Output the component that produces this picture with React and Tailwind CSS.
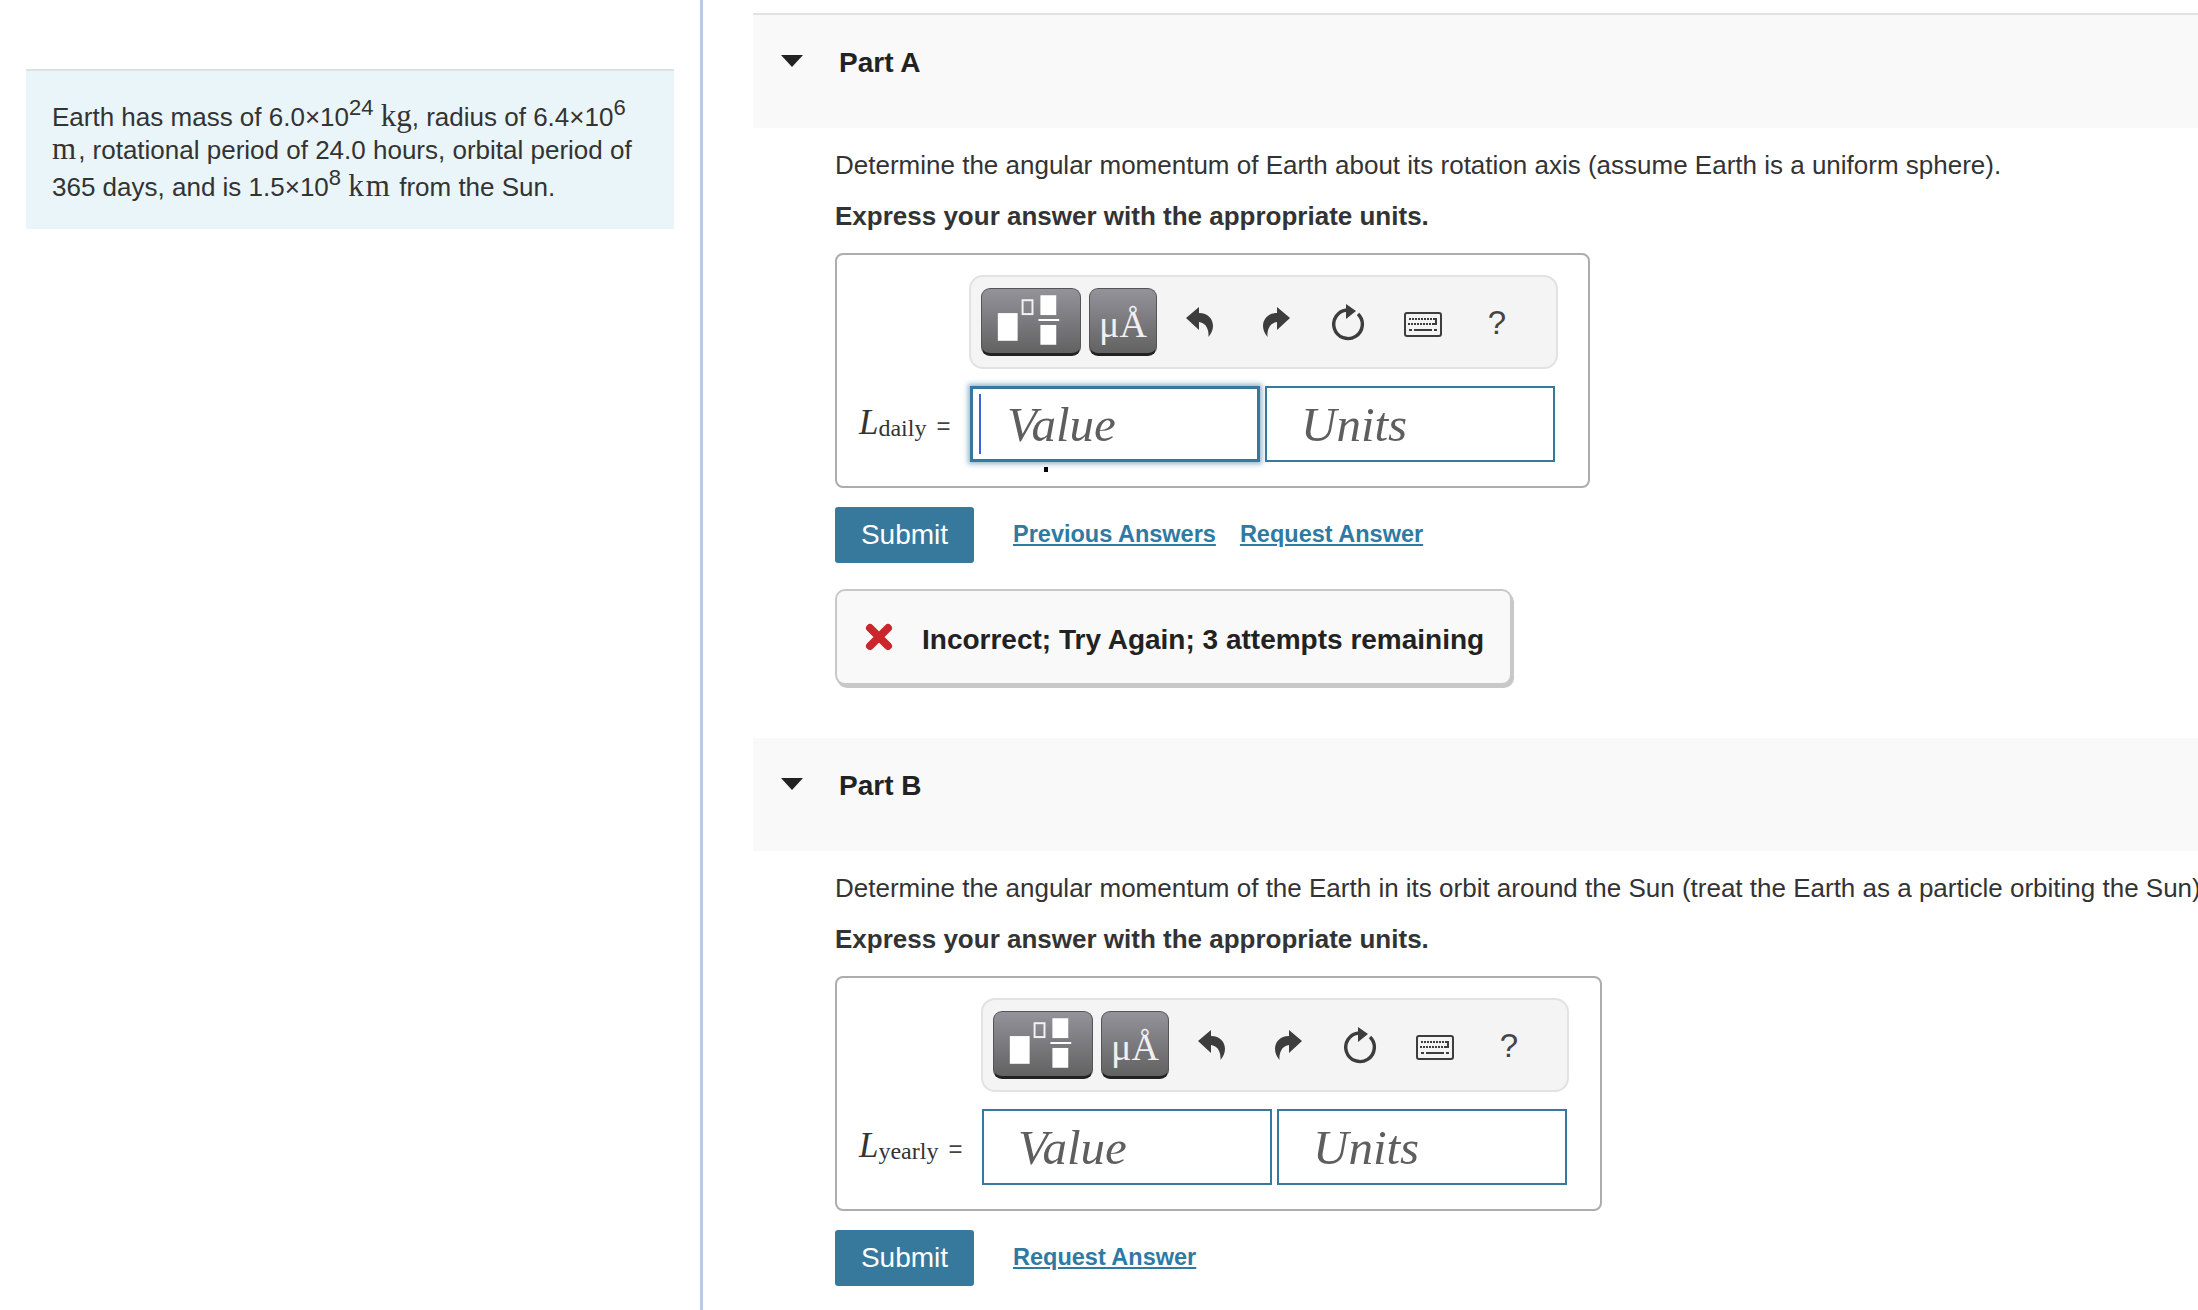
import React from "react";

const sans = "font-['Liberation_Sans',Arial,sans-serif]";
const serif = "font-['Liberation_Serif','Times_New_Roman',serif]";

function Undo({ flip }) {
  return (
    <svg width="27" height="30" viewBox="0 0 27 30" className={flip ? "-scale-x-100" : ""}>
      <path d="M0 11 L13 0 V6 C22 6 27 12 27 19 C27 23 25 27 22.5 30 C23 24 21 16 13 15 V23 Z" fill="#3d3d3d" />
    </svg>
  );
}

function Rotate() {
  return (
    <svg width="34" height="38" viewBox="0 0 34 38">
      <path d="M15 7 A14.3 14.3 0 1 0 26 11" fill="none" stroke="#3d3d3d" strokeWidth="3.4" />
      <path d="M14 1 L24 8 L14 16 Z" fill="#3d3d3d" />
    </svg>
  );
}

function Keyboard() {
  const top = [6, 9, 12, 15, 18, 21, 24, 27, 30];
  const mid = [5, 8, 11, 14, 17, 20, 23, 26];
  return (
    <svg width="38" height="25" viewBox="0 0 38 25">
      <rect x="1" y="1" width="36" height="23" rx="2" fill="#f4f4f4" stroke="#3d3d3d" strokeWidth="2" />
      {top.map((x) => <rect key={x} x={x - 1} y="6" width="2" height="2" fill="#3d3d3d" />)}
      {mid.map((x) => <rect key={x} x={x - 1} y="11" width="2" height="2" fill="#3d3d3d" />)}
      <path d="M31 6h2v7h-5v-2h3z" fill="#3d3d3d" />
      <rect x="5" y="17" width="3" height="2" fill="#3d3d3d" />
      <rect x="10" y="17" width="18" height="2" fill="#3d3d3d" />
      <rect x="30" y="17" width="3" height="2" fill="#3d3d3d" />
    </svg>
  );
}

function Toolbar({ className }) {
  const tool =
    "flex items-center justify-center rounded-[9px] h-[68px] border border-[#555] border-b-[3px] border-b-[#222] bg-gradient-to-b from-[#94939b] to-[#626262]";
  return (
    <div className={`flex items-center h-[94px] rounded-[14px] border-2 border-[#e2e2e2] bg-[#f4f4f4] pl-[10px] ${className}`}>
      <div className={`${tool} w-[100px]`}>
        <svg width="99" height="66" viewBox="0 0 99 66">
          <rect x="16" y="25" width="20" height="28" fill="#fff" />
          <rect x="41" y="12" width="10" height="14" fill="none" stroke="#f2f2f2" strokeWidth="2" />
          <rect x="59" y="7" width="16" height="20" fill="#fff" />
          <rect x="57" y="31" width="21" height="2" fill="#fff" />
          <rect x="59" y="37" width="16" height="20" fill="#fff" />
        </svg>
      </div>
      <div className={`${tool} w-[68px] ml-[8px] ${serif} text-[38px] leading-none text-[#f0f0f0] pt-[5px]`}>μÅ</div>
      <div className="w-[84px] flex justify-center"><Undo /></div>
      <div className="w-[70px] flex justify-center"><Undo flip /></div>
      <div className="w-[76px] flex justify-center"><Rotate /></div>
      <div className="w-[72px] flex justify-center pt-[5px]"><Keyboard /></div>
      <div className={`w-[76px] text-center ${sans} text-[33px] leading-none text-[#444]`}>?</div>
    </div>
  );
}

function InputBox({ text, focused, cursor }) {
  return (
    <div
      className={`relative flex items-center w-[290px] h-[76px] border-2 border-[#37799c] bg-white pl-[34px] ${serif} italic text-[49px] leading-none text-[#5e5e5e] ${
        focused ? "border-[3px] shadow-[0_0_5px_2px_rgba(55,121,156,0.55)]" : ""
      }`}
    >
      {text}
      {cursor && <span className="absolute left-[6px] top-[5px] w-[2px] h-[60px] bg-[#3f64d2]" />}
      {cursor && <span className="absolute left-[71px] top-[78px] w-[4px] h-[5px] bg-black" />}
    </div>
  );
}

function AnswerBox({ sub, boxW, toolbar, labelW, focused }) {
  return (
    <div className={`${boxW} h-[235px] rounded-[8px] border-2 border-[#adadad] pt-[20px] bg-white`}>
      <Toolbar className={toolbar} />
      <div className="flex items-center mt-[17px]">
        <div className={`${labelW} pl-[22px] pb-[3px] flex items-baseline text-[#333] whitespace-nowrap`}>
          <span className={`${serif} italic text-[35px] leading-none`}>L</span>
          <span className={`${serif} text-[24px] leading-none relative top-[2px]`}>{sub}</span>
          <span className={`${sans} text-[24px] leading-none ml-[10px] text-[#444]`}>=</span>
        </div>
        <InputBox text="Value" focused={focused} cursor={focused} />
        <div className="w-[5px]" />
        <InputBox text="Units" />
      </div>
    </div>
  );
}

function Actions({ previous }) {
  const link = "text-[#2f7aa3] underline font-bold text-[23.5px] leading-none";
  return (
    <div className="flex items-center mt-[19px]">
      <button className="w-[139px] h-[56px] rounded-[3px] bg-[#37799c] text-white text-[28px] leading-none">Submit</button>
      <a className={`${link} ml-[39px]`}>{previous ? "Previous Answers" : "Request Answer"}</a>
      {previous && <a className={`${link} ml-[24px]`}>Request Answer</a>}
    </div>
  );
}

function PartHeader({ title, className }) {
  return (
    <div className={`flex items-start bg-[#f9f9f9] ${className}`}>
      <svg width="22" height="12" viewBox="0 0 22 12" className="ml-[28px] mt-[40px]">
        <path d="M0 0 H22 L11 12 Z" fill="#222" />
      </svg>
      <div className="ml-[36px] mt-[30px] text-[28px] leading-[36px] font-bold text-[#222]">{title}</div>
    </div>
  );
}

function Part({ title, headerClass, question, label }) {
  return (
    <section>
      <PartHeader title={title} className={headerClass} />
      <div className="pl-[82px]">
        <p className="mt-[19px] h-[36px] text-[26px] leading-[36px] text-[#333] whitespace-nowrap">{question}</p>
        <p className="mt-[15px] h-[36px] text-[26px] leading-[36px] font-bold text-[#333] whitespace-nowrap">Express your answer with the appropriate units.</p>
        <div className="mt-[19px]">{label}</div>
      </div>
    </section>
  );
}

export default function App() {
  const kg = `${serif} text-[31px]`;
  const km = `${serif} text-[31px] tracking-[2px]`;
  const sup = "text-[22px]";
  return (
    <div className={`flex w-[2198px] h-[1310px] overflow-hidden bg-white ${sans}`}>
      <aside className="w-[703px] shrink-0 border-r-[3px] border-[#b9cbe0] pt-[69px] pl-[26px]">
        <div className="w-[648px] h-[160px] bg-[#e9f5f8] border-t-2 border-[#e0e0e4] pl-[26px] pt-[28px] text-[26px] leading-[34px] text-[#333]">
          <div className="whitespace-nowrap">
            Earth has mass of 6.0×10<sup className={sup}>24</sup> <span className={kg}>kg</span>, radius of 6.4×10<sup className={sup}>6</sup>
          </div>
          <div className="whitespace-nowrap -mt-[2px]">
            <span className={km}>m</span>, rotational period of 24.0 hours, orbital period of
          </div>
          <div className="whitespace-nowrap mt-[2px]">
            365 days, and is 1.5×10<sup className={sup}>8</sup> <span className={km}>km</span> from the Sun.
          </div>
        </div>
      </aside>
      <main className="flex-1 min-w-0 pl-[50px] pt-[13px]">
        <Part
          title="Part A"
          headerClass="h-[115px] border-t-2 border-[#e2e2e2]"
          question="Determine the angular momentum of Earth about its rotation axis (assume Earth is a uniform sphere)."
          label={
            <>
              <AnswerBox sub="daily" boxW="w-[755px]" toolbar="ml-[132px] w-[589px]" labelW="w-[133px]" focused />
              <Actions previous />
              <div className="flex items-center w-[677px] h-[96px] mt-[26px] rounded-[10px] border-2 border-[#c8c8c8] shadow-[2px_3px_0_#c8c8c8] bg-[#f9f9f9] pl-[28px]">
                <svg width="28" height="28" viewBox="0 0 28 28">
                  <path d="M5 5 L23 23 M23 5 L5 23" stroke="#c9272b" strokeWidth="8" strokeLinecap="round" />
                </svg>
                <span className="ml-[29px] pt-[6px] text-[28px] leading-none font-bold text-[#222] whitespace-nowrap">Incorrect; Try Again; 3 attempts remaining</span>
              </div>
              <div className="h-[53px]" />
            </>
          }
        />
        <Part
          title="Part B"
          headerClass="h-[113px]"
          question="Determine the angular momentum of the Earth in its orbit around the Sun (treat the Earth as a particle orbiting the Sun)."
          label={
            <>
              <AnswerBox sub="yearly" boxW="w-[767px]" toolbar="ml-[144px] w-[588px]" labelW="w-[145px]" />
              <Actions />
            </>
          }
        />
      </main>
    </div>
  );
}
